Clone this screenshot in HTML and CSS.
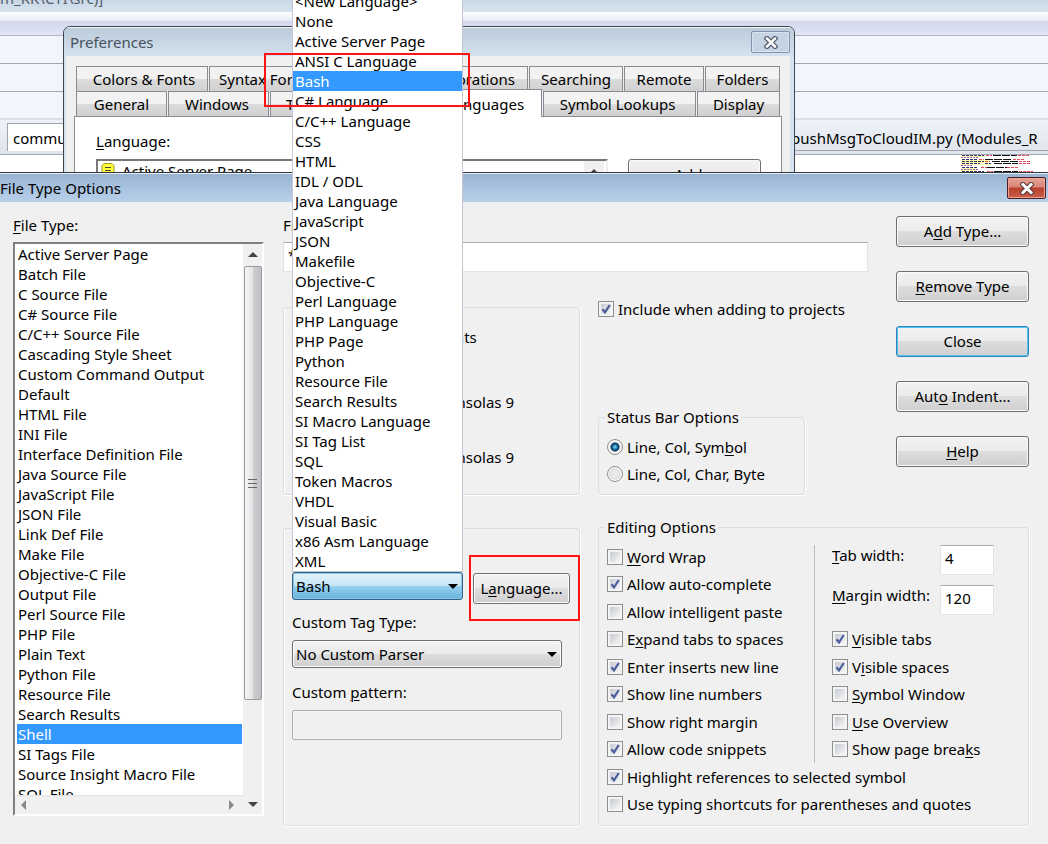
FILE: index.html
```html
<!DOCTYPE html>
<html lang="en">
<head>
<meta charset="utf-8">
<title>File Type Options</title>
<link rel="stylesheet" href="styles.css">
</head>
<body>
<div class="desktop">
  <div class="editor">
    <div class="editor-title"><span>m_RK\CTI\src)]</span></div>
    <div class="editor-gloss"></div>
    <div class="editor-menu"></div>
    <div class="toolbar"></div>
    <div class="toolbar"></div>
    <div class="toolbar toolbar-last"></div>
    <div class="file-tabs">
      <div class="file-tab file-tab-active">commu</div>
      <div class="file-tab">pushMsgToCloudIM.py (Modules_R</div>
    </div>
    <div class="editor-page">
      <svg class="minimap" width="74" height="20" viewBox="0 0 74 20" aria-hidden="true">
        <path fill="#ffffa8" d="M0 0h24v2H0zM0 5h28v3H0zM0 9h30v1H0zM0 13h15v4H0z"/>
        <g fill="none" stroke-dasharray="3 1">
          <path stroke="#33337a" d="M1 .5h22M1 4.500h16M1 6.500h22M1 8.500h18M1 12.500h16M1 16.500h22M24 8.500h6"/>
          <path stroke="#a45cc0" stroke-dasharray="2 1" d="M0 2.500h17M0 10.500h12M0 14.500h18"/>
          <path stroke="#e84a5a" d="M25 .5h6M18 4.500h5M24 6.500h5M20 12.500h6M26 16.500h6M57 .5h12M52 4.500h12M58 6.500h12M58 8.500h12M46 12.500h12M58 16.500h14"/>
          <path stroke="#111" stroke-dasharray="8 1" d="M32 .5h24M24 4.500h27M31 6.500h26M33 8.500h24M26 12.500h20M33 16.500h24"/>
        </g>
      </svg>
    </div>
  </div>

  <section class="prefs" aria-label="Preferences">
    <div class="prefs-title">
      <span>Preferences</span>
      <button class="prefs-close" aria-label="Close preferences">
        <svg width="14" height="13" viewBox="0 0 14 13"><path d="M3 2.500 11 10.500M11 2.500 3 10.500" stroke="#4c5668" stroke-width="5" stroke-linecap="square"/><path d="M3 2.500 11 10.500M11 2.500 3 10.500" stroke="#fff" stroke-width="2.600" stroke-linecap="square"/></svg>
      </button>
    </div>
    <div class="prefs-body">
      <div class="tab-row">
        <button class="tab w-colors">Colors &amp; Fonts</button>
        <button class="tab tab-start w-format">Syntax Formatting</button>
        <button class="tab tab-end tab-grow">Syntax Decorations</button>
        <button class="tab w-search">Searching</button>
        <button class="tab w-remote">Remote</button>
        <button class="tab w-folders">Folders</button>
      </div>
      <div class="tab-row">
        <button class="tab w-general">General</button>
        <button class="tab w-windows">Windows</button>
        <button class="tab tab-start tab-grow">Typing</button>
        <button class="tab tab-active w-languages">Languages</button>
        <button class="tab w-lookups">Symbol Lookups</button>
        <button class="tab w-display">Display</button>
      </div>
      <div class="prefs-pane">
        <div class="prefs-label"><u>L</u>anguage:</div>
        <div class="prefs-row">
          <div class="prefs-list">
            <svg width="14" height="14" viewBox="0 0 14 14" aria-hidden="true"><path d="M3 .5h8l2 2v7l-2 2H7l-3 2v-2H3l-2-2v-7z" fill="#ffff3c" stroke="#a09a20"/><path d="M4 4.500h6M4 7.500h6" stroke="#444"/></svg>
            <span class="prefs-item">Active Server Page</span>
            <span class="prefs-scroll"><svg width="10" height="6" viewBox="0 0 10 6"><path d="M5 0 10 5H0z" fill="#444"/></svg></span>
          </div>
          <button class="button button-wide">Add...</button>
        </div>
      </div>
    </div>
  </section>

  <section class="dialog" aria-label="File Type Options">
    <div class="dialog-title">
      <span>File Type Options</span>
      <button class="dialog-close" aria-label="Close dialog">
        <svg width="14" height="13" viewBox="0 0 14 13"><path d="M3 2.500 11 10.500M11 2.500 3 10.500" stroke="#54363a" stroke-width="5" stroke-linecap="square"/><path d="M3 2.500 11 10.500M11 2.500 3 10.500" stroke="#fff" stroke-width="3" stroke-linecap="square"/></svg>
      </button>
    </div>
    <div class="dialog-body">
      <div class="types">
        <label for="types"><u>F</u>ile Type:</label>
        <div class="listbox">
          <select id="types" class="list" size="28">
            <option>Active Server Page</option>
            <option>Batch File</option>
            <option>C Source File</option>
            <option>C# Source File</option>
            <option>C/C++ Source File</option>
            <option>Cascading Style Sheet</option>
            <option>Custom Command Output</option>
            <option>Default</option>
            <option>HTML File</option>
            <option>INI File</option>
            <option>Interface Definition File</option>
            <option>Java Source File</option>
            <option>JavaScript File</option>
            <option>JSON File</option>
            <option>Link Def File</option>
            <option>Make File</option>
            <option>Objective-C File</option>
            <option>Output File</option>
            <option>Perl Source File</option>
            <option>PHP File</option>
            <option>Plain Text</option>
            <option>Python File</option>
            <option>Resource File</option>
            <option>Search Results</option>
            <option selected>Shell</option>
            <option>SI Tags File</option>
            <option>Source Insight Macro File</option>
            <option>SQL File</option>
          </select>
          <div class="vscroll" aria-hidden="true">
            <svg width="10" height="6" viewBox="0 0 10 6"><path d="M5 0 10 5H0z" fill="#444"/></svg>
            <div class="thumb"><svg width="10" height="9" viewBox="0 0 10 9"><path d="M0 .5h9M0 4.500h9M0 8.500h9" stroke="#666"/></svg></div>
            <svg width="10" height="6" viewBox="0 0 10 6"><path d="M5 5 10 0H0z" fill="#444"/></svg>
          </div>
          <div class="hscroll" aria-hidden="true">
            <svg width="6" height="10" viewBox="0 0 6 10"><path d="M0 5 5 0v10z" fill="#888"/></svg>
            <svg width="6" height="10" viewBox="0 0 6 10"><path d="M5 5 0 0v10z" fill="#888"/></svg>
          </div>
        </div>
      </div>

      <div class="options">
        <div class="upper">
          <div class="upper-main">
            <label for="filter">File filter:</label>
            <input id="filter" class="field filter" type="text" value="*.sh">
            <div class="upper-row">
              <div class="group fonts">
                <div>Fonts</div>
                <div>Consolas 9</div>
                <div>Consolas 9</div>
              </div>
              <div class="status-col">
                <label class="check"><input type="checkbox" checked>Include when adding to projects</label>
                <fieldset class="status">
                  <legend>Status Bar Options</legend>
                  <label class="check"><input type="radio" name="status" checked><span>Line, Col, Sym<u>b</u>ol</span></label>
                  <label class="check"><input type="radio" name="status"><span>Line, Col, Char, Byte</span></label>
                </fieldset>
              </div>
            </div>
          </div>
          <div class="actions">
            <button class="button"><span>A<u>d</u>d Type...</span></button>
            <button class="button"><span><u>R</u>emove Type</span></button>
            <button class="button button-default">Close</button>
            <button class="button"><span>Aut<u>o</u> Indent...</span></button>
            <button class="button"><span><u>H</u>elp</span></button>
          </div>
        </div>

        <div class="lower">
          <div class="group parsing">
            <div class="language-row">
              <div class="combo combo-open">
                <select aria-label="Language"><option>Bash</option></select>
                <svg class="arrow" width="10" height="5" viewBox="0 0 10 5"><path d="M0 0h10L5 5z"/></svg>
                <ul class="menu" role="listbox" aria-label="Languages">
                  <li role="option">&lt;New Language&gt;</li>
                  <li role="option">None</li>
                  <li role="option">Active Server Page</li>
                  <li role="option">ANSI C Language</li>
                  <li role="option" class="current" aria-selected="true">Bash</li>
                  <li role="option">C# Language</li>
                  <li role="option">C/C++ Language</li>
                  <li role="option">CSS</li>
                  <li role="option">HTML</li>
                  <li role="option">IDL / ODL</li>
                  <li role="option">Java Language</li>
                  <li role="option">JavaScript</li>
                  <li role="option">JSON</li>
                  <li role="option">Makefile</li>
                  <li role="option">Objective-C</li>
                  <li role="option">Perl Language</li>
                  <li role="option">PHP Language</li>
                  <li role="option">PHP Page</li>
                  <li role="option">Python</li>
                  <li role="option">Resource File</li>
                  <li role="option">Search Results</li>
                  <li role="option">SI Macro Language</li>
                  <li role="option">SI Tag List</li>
                  <li role="option">SQL</li>
                  <li role="option">Token Macros</li>
                  <li role="option">VHDL</li>
                  <li role="option">Visual Basic</li>
                  <li role="option">x86 Asm Language</li>
                  <li role="option">XML</li>
                </ul>
              </div>
              <button class="button button-language"><span>L<u>a</u>nguage...</span></button>
            </div>
            <label for="tagtype">Custom Tag T<u>y</u>pe:</label>
            <div class="combo combo-tag">
              <select id="tagtype"><option>No Custom Parser</option></select>
              <svg class="arrow" width="10" height="5" viewBox="0 0 10 5"><path d="M0 0h10L5 5z"/></svg>
            </div>
            <label for="pattern">Custom <u>p</u>attern:</label>
            <input id="pattern" class="pattern" type="text" disabled>
          </div>

          <fieldset class="editing">
            <legend>Editing Options</legend>
            <div class="editing-cols">
              <div class="editing-left">
                <label class="check"><input type="checkbox"><span><u>W</u>ord Wrap</span></label>
                <label class="check"><input type="checkbox" checked>Allow auto-complete</label>
                <label class="check"><input type="checkbox">Allow intelligent paste</label>
                <label class="check"><input type="checkbox"><span>E<u>x</u>pand tabs to spaces</span></label>
                <label class="check"><input type="checkbox" checked>Enter inserts new line</label>
                <label class="check"><input type="checkbox" checked>Show line numbers</label>
                <label class="check"><input type="checkbox">Show right margin</label>
                <label class="check"><input type="checkbox" checked>Allow code snippets</label>
              </div>
              <div class="editing-right">
                <div class="widths">
                  <label for="tabw"><u>T</u>ab width:</label>
                  <input id="tabw" class="field" type="text" value="4">
                  <label for="marginw"><u>M</u>argin width:</label>
                  <input id="marginw" class="field" type="text" value="120">
                </div>
                <div class="visibles">
                  <label class="check"><input type="checkbox" checked><span><u>V</u>isible tabs</span></label>
                  <label class="check"><input type="checkbox" checked><span>V<u>i</u>sible spaces</span></label>
                  <label class="check"><input type="checkbox"><span><u>S</u>ymbol Window</span></label>
                  <label class="check"><input type="checkbox"><span><u>U</u>se Overview</span></label>
                  <label class="check"><input type="checkbox"><span>Show page brea<u>k</u>s</span></label>
                </div>
              </div>
            </div>
            <div class="editing-wide">
              <label class="check"><input type="checkbox" checked>Highlight references to selected symbol</label>
              <label class="check"><input type="checkbox">Use typing shortcuts for parentheses and quotes</label>
            </div>
          </fieldset>
        </div>
      </div>
    </div>
  </section>

  <div class="mark mark-item"></div>
  <div class="mark mark-button"></div>
</div>
</body>
</html>
```
FILE: styles.css
```css
* { box-sizing: border-box; }

body {
  margin: 0;
  color: #000;
  font: 15px/20px "Noto Sans", "Open Sans", sans-serif;
}

button, input, select {
  margin: 0;
  color: inherit;
  font: inherit;
}

svg { display: block; fill: none; }
.arrow path { fill: #000; }
u { text-underline-offset: 2px; text-decoration-thickness: 1px; }

.desktop {
  position: relative;
  min-height: 100vh;
  overflow: hidden;
  background: #fff;
}

/* Editor behind the dialogs */
.editor { display: flex; flex-direction: column; white-space: nowrap; }
.editor-title {
  display: flex;
  align-items: flex-end;
  height: 12px;
  background: linear-gradient(#c9d8e6, #d7e4f0);
  color: #555f69;
}
.editor-title span { line-height: 28px; }
.editor-gloss { height: 9px; background: linear-gradient(#fff, #e6eaf5); }
.editor-menu { height: 15px; border-bottom: 1px solid #b4b7c0; background: linear-gradient(#d2d7ec, #e1e5f5); }
.toolbar { height: 28px; border-bottom: 1px solid #a3a5aa; background: #f1f5fe; }
.toolbar-last { border-bottom: 2px solid #dadfe7; }
.file-tabs {
  display: grid;
  grid-template-columns: 779px 1fr;
  height: 35px;
  padding-left: 7px;
  border-bottom: 1px solid #a4a7b4;
  background: linear-gradient(#eef2f8, #dfe4ec);
}
.file-tab {
  height: 31px;
  padding: 8px 0 0 5px;
  border-bottom: 1px solid #9fa3ae;
}
.file-tab-active {
  height: 28px;
  margin-top: 3px;
  padding-top: 4px;
  border: solid #9fa3ae;
  border-width: 1px 0 0 1px;
  background: #fff;
}
.editor-page { display: flex; justify-content: flex-end; padding-right: 13px; }

/* Preferences window */
.prefs {
  position: absolute;
  top: 26px;
  left: 63px;
  width: 732px;
  height: 300px;
  border: 1px solid #3f444c;
  border-radius: 7px;
  overflow: hidden;
  background: #d6e3f0;
}
.prefs-title {
  display: flex;
  justify-content: space-between;
  height: 29px;
  padding: 3px 4px 0 6px;
  border-top: 1px solid #f4f8fc;
  background: linear-gradient(#bccbd9, #d4e2f0);
  color: #46525e;
}
.prefs-title span { padding-top: 1px; }
.prefs-close {
  display: grid;
  place-items: center;
  width: 39px;
  height: 22px;
  padding: 0;
  border: 1px solid #8393ad;
  border-radius: 2px;
  background: #c5d3e3;
  box-shadow: inset 0 0 0 1px #d9e4ef;
}
.prefs-body {
  height: 100%;
  margin: 0 4px 0 2px;
  padding: 10px 8px 0;
  background: #f0f0f0;
}
.tab-row { display: flex; gap: 1px; margin: 0 2px; height: 25px; }
.tab {
  flex: none;
  padding: 0;
  overflow: hidden;
  border: 1px solid #898c95;
  border-bottom: 0;
  background: linear-gradient(#f2f2f2 48%, #dcdcdc 50%, #d0d0d0);
  white-space: nowrap;
  text-align: center;
}
.tab-grow { flex: 1; }
.tab-start { padding-left: 9px; text-align: left; }
.tab-grow.tab-start { padding-left: 15px; }
.tab-end { display: flex; justify-content: flex-end; align-items: center; padding-right: 12px; }
.w-colors { width: 132px; padding-left: 4px; }
.w-format { width: 150px; }
.w-search { width: 94px; }
.w-remote { width: 80px; }
.w-folders { width: 75px; }
.w-general { width: 91px; }
.w-windows { width: 101px; padding-right: 3px; }
.w-languages { width: 104px; padding-right: 9px; }
.w-lookups { width: 153px; padding-right: 4px; }
.w-display { width: 83px; }
.tab-active {
  position: relative;
  height: 28px;
  margin-top: -2px;
  background: #fff;
}
.prefs-pane {
  height: 100%;
  padding: 14px 20px 0 21px;
  border: 1px solid #898c95;
  background: #fff;
}
.prefs-row { display: flex; justify-content: space-between; margin-top: 8px; }
.prefs-list {
  display: flex;
  gap: 7px;
  width: 512px;
  height: 60px;
  padding: 0 2px 0 3px;
  border: 2px solid #777;
  border-right-color: #eee;
}
.prefs-list > svg { margin-top: 2px; }
.prefs-scroll { width: 20px; margin-left: auto; padding: 8px 0 0 5px; background: #f0f0f0; }

/* Shared controls */
.button {
  flex: none;
  height: 31px;
  padding: 0 0 2px;
  border: 1px solid #707070;
  border-radius: 3px;
  background: linear-gradient(#f2f2f2, #ebebeb 49%, #dddddd 50%, #cfcfcf);
  box-shadow: inset 0 0 0 1px #fafafa;
  text-align: center;
}
.button-default { border-color: #3c7fb1; box-shadow: inset 0 0 0 1px #48c8f2; }
.button-wide { width: 133px; }
.button-language { width: 97px; margin-top: 1px; }

.field {
  width: 100%;
  height: 30px;
  padding: 0 4px 4px;
  border: 1px solid #e2e3ea;
  border-top-color: #abadb3;
  background: #fff;
}

.check { display: flex; align-items: center; gap: 4px; height: 20px; white-space: nowrap; }
.check input {
  flex: none;
  width: 16px;
  height: 16px;
  appearance: none;
  border: 1px solid #8e8f8f;
  background: linear-gradient(135deg, #c6cad2, #f6f6f6) center / 10px 10px no-repeat #f4f4f4;
}
.check input[type="checkbox"]:checked {
  background:
    url("data:image/svg+xml,%3Csvg xmlns='http://www.w3.org/2000/svg' viewBox='0 0 14 14'%3E%3Cpath d='M3.500 7.200 6 10.300 10.800 3' fill='none' stroke='%234a5f9c' stroke-width='2.200'/%3E%3C/svg%3E") center / 14px 14px no-repeat,
    linear-gradient(135deg, #c6cad2, #f6f6f6) center / 10px 10px no-repeat #f4f4f4;
}
.check input[type="radio"] {
  border-radius: 50%;
  background: radial-gradient(circle, #e9e9e9 0 4px, #d0d3d8 5px, #f8f8f8 6px);
}
.check input[type="radio"]:checked {
  background: radial-gradient(circle at 7px 7px, #8fe0f6 0, #1c88b8 2px, #0c2c50 4px, transparent 5px), #f4f4f4;
}

.group, fieldset {
  margin: 0;
  border: 1px solid #d5dfe5;
  border-radius: 3px;
  box-shadow: inset 1px 0 #fff, 0 1px #fff, 1px 0 #fff;
}
fieldset { min-width: 0; box-shadow: 0 1px #fff, 1px 0 #fff; }
legend { height: 20px; margin-left: -2px; padding: 0 2px; }

.combo { position: relative; height: 28px; }
.combo select {
  width: 100%;
  height: 28px;
  padding: 0 24px 0 3px;
  appearance: none;
  border: 1px solid #707070;
  border-radius: 3px;
  background: linear-gradient(#f2f2f2, #ebebeb 49%, #dddddd 50%, #cfcfcf);
  box-shadow: inset 0 0 0 1px #fafafa;
}
.arrow { position: absolute; top: 12px; right: 5px; }
.combo-open { flex: 1; }
.combo-open select {
  border-color: #2c628b;
  background: linear-gradient(#e5f4fc, #c4e5f6 49%, #98d1ef 50%, #68b3db);
  box-shadow: inset 0 0 0 1px #8cc3e0;
}

.menu {
  position: absolute;
  bottom: 100%;
  left: 0;
  z-index: 5;
  width: 100%;
  margin: 0;
  padding: 0;
  border: 1px solid #c4c4d2;
  background: #fff;
  list-style: none;
}
.menu li { height: 20px; padding-left: 2px; white-space: nowrap; }
.menu .current { background: #3399ff; color: #fff; }

/* File Type Options dialog */
.dialog {
  position: absolute;
  inset: 172px 0 0;
  border-top: 1px solid #30353c;
  background: #f0f0f0;
}
.dialog-title {
  display: flex;
  justify-content: space-between;
  height: 29px;
  padding: 3px 2px 0 0;
  border-top: 1px solid #e8f1fa;
  background: linear-gradient(#98b4d2, #b8d0ea);
}
.dialog-title span { padding-top: 1px; }
.dialog-close {
  display: grid;
  place-items: center;
  width: 39px;
  height: 22px;
  padding: 0;
  border: 1px solid #4f1c22;
  border-radius: 2px;
  background: linear-gradient(#e6a397, #d98475 45%, #b8402c 50%, #c8604a);
  box-shadow: inset 0 0 0 1px #e8a598;
}
.dialog-body { display: flex; gap: 19px; padding: 13px 19px 18px 13px; }

.types { display: flex; flex: none; flex-direction: column; gap: 7px; width: 251px; }
.listbox {
  display: grid;
  grid-template: 551px 19px / 1fr 19px;
  border: 2px solid #fff;
  border-top-color: #808080;
  border-left-color: #808080;
  background: #f0f0f0;
}
.list {
  width: 100%;
  height: 551px;
  padding: 0;
  overflow: hidden;
  border: 0;
  border-radius: 0;
  outline: 0;
  background: #fff;
}
.list option { height: 20px; min-height: 20px; margin: 0 1px 0 2px; padding: 0 1px; line-height: 20px; }
.list option:checked { background: linear-gradient(#3399ff, #3399ff); color: #fff; -webkit-text-fill-color: #fff; }
.vscroll {
  display: flex;
  flex-direction: column;
  grid-row: span 2;
  gap: 8px;
  align-items: center;
  padding: 8px 0 6px;
}
.vscroll > svg:last-child { margin-top: auto; }
.thumb {
  display: grid;
  flex: none;
  place-items: center;
  width: 18px;
  height: 434px;
  border: 1px solid #9a9a9e;
  border-radius: 2px;
  background: linear-gradient(90deg, #f5f5f5, #e4e4e6 48%, #cfcfd3 50%, #bfc0c5);
}
.hscroll { display: flex; align-items: center; justify-content: space-between; padding: 0 8px 0 6px; border-top: 1px solid #e3e3e3; }

.options { display: flex; flex: 1; flex-direction: column; gap: 22px; min-width: 0; }
.upper { display: flex; gap: 28px; }
.upper-main { display: flex; flex: 1; flex-direction: column; }
.filter { margin-top: 7px; }
.upper-row { display: flex; gap: 19px; margin-top: 27px; }
.fonts {
  display: grid;
  flex: none;
  grid-template-rows: 65px 55px 20px;
  width: 297px;
  height: 188px;
  margin-top: 8px;
  padding: 19px 0 0 154px;
}
.status-col { flex: 1; margin-left: -1px; }
.status {
  display: flex;
  flex-direction: column;
  gap: 7px;
  width: 207px;
  height: 88px;
  margin-top: 88px;
  padding: 10px 8px 0;
}
.actions { display: flex; flex: none; flex-direction: column; gap: 24px; width: 133px; margin-top: 1px; }

.lower { display: flex; gap: 18px; }
.parsing {
  display: flex;
  flex: none;
  flex-direction: column;
  width: 297px;
  margin-top: 11px;
  padding: 43px 8px 0;
}
.language-row { display: flex; gap: 10px; width: 278px; margin-bottom: 8px; }
.combo-tag { width: 270px; margin: 8px 0 14px; }
.pattern { width: 270px; height: 30px; margin-top: 8px; border: 1px solid #afafaf; border-radius: 2px; background: #f0f0f0; box-shadow: inset 0 0 0 1px #f7f7f7; }

.editing { flex: 1; height: 309px; padding: 8px 8px 0; }
.editing-cols { display: flex; }
.editing-left {
  display: flex;
  flex: none;
  flex-direction: column;
  justify-content: space-between;
  width: 208px;
  height: 218px;
  padding: 2px 0 4px;
  border-right: 1px solid #bdbdbd;
}
.editing-right { padding-left: 17px; }
.widths { display: grid; grid-template-columns: 108px 54px; gap: 10px 0; }
.visibles { display: flex; flex-direction: column; justify-content: space-between; height: 130px; margin-top: 14px; }
.editing-wide { display: flex; flex-direction: column; gap: 7px; margin-top: 4px; }

/* Callout frames */
.mark { position: absolute; z-index: 6; border: 2px solid #ff1414; pointer-events: none; }
.mark-item { top: 53px; left: 264px; width: 206px; height: 54px; }
.mark-button { top: 555px; left: 469px; width: 111px; height: 66px; }
```
